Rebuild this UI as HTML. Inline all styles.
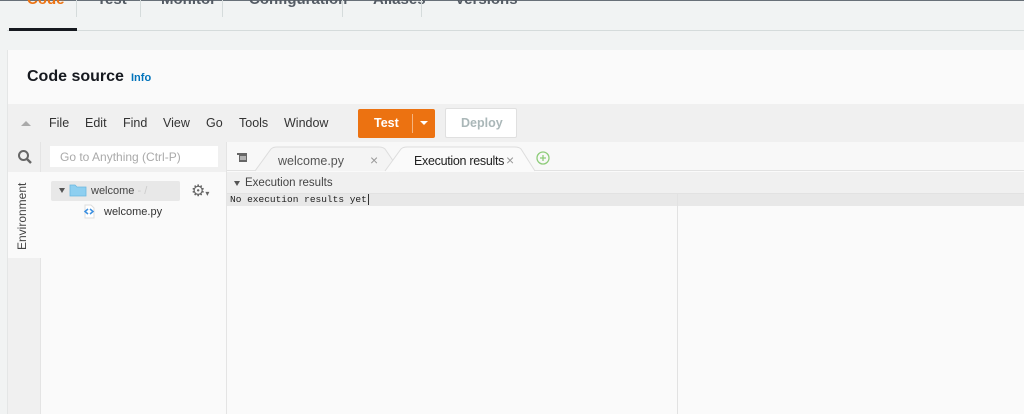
<!DOCTYPE html>
<html><head><style>
*{margin:0;padding:0;box-sizing:border-box}
body{width:1024px;height:414px;overflow:hidden;background:#f1f3f3;font-family:"Liberation Sans",sans-serif;position:relative}
.a{position:absolute}
.tab{position:absolute;top:-9px;font-size:15px;font-weight:bold;color:#545b64;white-space:nowrap}
.sep{position:absolute;top:0;width:1px;height:17px;background:#d5dbdb}
.menu{position:absolute;top:116px;font-size:12.5px;color:#333}
</style></head><body>
<div class="a" style="left:0;top:0;width:1024px;height:1px;background:#687078"></div>
<div class="tab" style="left:27px;color:#ec7211">Code</div>
<div class="sep" style="left:76px"></div>
<div class="tab" style="left:97px">Test</div>
<div class="sep" style="left:140px"></div>
<div class="tab" style="left:161px">Monitor</div>
<div class="sep" style="left:222px"></div>
<div class="tab" style="left:249px">Configuration</div>
<div class="sep" style="left:342px"></div>
<div class="tab" style="left:373px">Aliases</div>
<div class="sep" style="left:421px"></div>
<div class="tab" style="left:455px">Versions</div>
<div class="a" style="left:7px;top:30px;width:1017px;height:1px;background:#d5dbdb"></div>
<div class="a" style="left:9px;top:28px;width:68px;height:3px;background:#16191f"></div>

<div class="a" style="left:7px;top:50px;width:1017px;height:364px;background:#fafafa;border-left:1px solid #e4e6e6"></div>
<div class="a" style="left:27px;top:68px;font-size:16px;font-weight:bold;color:#16191f">Code source</div>
<div class="a" style="left:131px;top:72px;font-size:11px;font-weight:bold;color:#0073bb">Info</div>

<div class="a" style="left:8px;top:104px;width:1016px;height:38px;background:#f0f0f0"></div>
<div class="a" style="left:21px;top:121px;width:0;height:0;border-left:5px solid transparent;border-right:5px solid transparent;border-bottom:5px solid #aaa"></div>
<div class="menu" style="left:49px">File</div>
<div class="menu" style="left:85px">Edit</div>
<div class="menu" style="left:123px">Find</div>
<div class="menu" style="left:163px">View</div>
<div class="menu" style="left:206px">Go</div>
<div class="menu" style="left:239px">Tools</div>
<div class="menu" style="left:284px">Window</div>
<div class="a" style="left:358px;top:109px;width:77px;height:29px;background:#ec7211;border-radius:2px"></div>
<div class="a" style="left:374px;top:116px;font-size:12.5px;font-weight:bold;color:#fff">Test</div>
<div class="a" style="left:412px;top:114px;width:1px;height:19px;background:#f6b47e"></div>
<div class="a" style="left:420px;top:121px;width:0;height:0;border-left:4px solid transparent;border-right:4px solid transparent;border-top:4px solid #fff"></div>
<div class="a" style="left:445px;top:108px;width:72px;height:30px;background:#fff;border:1px solid #e0e0e0;border-radius:2px"></div>
<div class="a" style="left:461px;top:116px;font-size:12.5px;font-weight:bold;color:#aab7b8">Deploy</div>

<div class="a" style="left:8px;top:142px;width:33px;height:272px;background:#f0f0f0;border-right:1px solid #e4e4e4"></div>
<svg class="a" style="left:17px;top:149px" width="16" height="16" viewBox="0 0 16 16"><circle cx="6.5" cy="6.5" r="4.5" fill="none" stroke="#666" stroke-width="2"/><path d="M10 10l4 4" stroke="#666" stroke-width="2.4"/></svg>
<div class="a" style="left:8px;top:172px;width:33px;height:86px;background:#fafafa"></div>
<div class="a" style="left:15px;top:250px;transform:rotate(-90deg);transform-origin:0 0;font-size:12px;color:#444;white-space:nowrap">Environment</div>

<div class="a" style="left:41px;top:142px;width:186px;height:30px;background:#f0f0f0"></div>
<div class="a" style="left:50px;top:146px;width:168px;height:21px;background:#fff"></div>
<div class="a" style="left:60px;top:150px;font-size:12px;color:#aaa">Go to Anything (Ctrl-P)</div>
<div class="a" style="left:226px;top:142px;width:1px;height:272px;background:#e4e4e4"></div>
<div class="a" style="left:51px;top:181px;width:129px;height:20px;background:#e8e8e8;border-radius:2px"></div>
<div class="a" style="left:59px;top:188px;width:0;height:0;border-left:3.5px solid transparent;border-right:3.5px solid transparent;border-top:5px solid #555"></div>
<svg class="a" style="left:69px;top:183px" width="18" height="14" viewBox="0 0 18 14"><path d="M1 2h5l2 2h9v9H1z" fill="#8ecff0" stroke="#6bb8e0" stroke-width="0.8"/></svg>
<div class="a" style="left:91px;top:185px;font-size:11px;color:#444">welcome <span style="color:#ccc">- /</span></div>
<div class="a" style="left:191px;top:181px;font-size:16px;color:#666">⚙<span style="font-size:8px">▾</span></div>
<svg class="a" style="left:82px;top:204px" width="14" height="15" viewBox="0 0 14 15"><path d="M3 1h6l3 3v10H3z" fill="#fff" stroke="#ddd"/><path d="M6 5l-3 2.5L6 10M8 5l3 2.5L8 10" fill="none" stroke="#3b8fe0" stroke-width="1.5"/></svg>
<div class="a" style="left:104px;top:206px;font-size:11px;color:#333">welcome.py</div>

<div class="a" style="left:227px;top:142px;width:797px;height:29px;background:#f8f8f8;border-bottom:1px solid #e2e2e2"></div>
<svg class="a" style="left:236px;top:152px" width="12" height="11" viewBox="0 0 12 11"><path d="M1 1h10v9H3V3H1z" fill="#666"/><path d="M4 5h6M4 7h6" stroke="#fff"/></svg>
<svg class="a" style="left:255px;top:146px" width="280" height="26" viewBox="0 0 280 26"><path d="M0 25L16 3Q18 1 22 1H124Q128 1 130 3L145 25" fill="#f4f4f4" stroke="#ddd"/><path d="M130 25L146 3Q148 1 152 1H260Q264 1 266 3L280 25" fill="#fafafa" stroke="#ddd"/></svg>
<div class="a" style="left:278px;top:154px;font-size:12.5px;color:#555">welcome.py</div>
<div class="a" style="left:370px;top:152px;font-size:14px;color:#999">×</div>
<div class="a" style="left:414px;top:154px;font-size:12.5px;color:#222;width:91px;overflow:hidden;white-space:nowrap;letter-spacing:-0.3px">Execution results</div>
<div class="a" style="left:506px;top:152px;font-size:14px;color:#999">×</div>
<svg class="a" style="left:536px;top:151px" width="14" height="14" viewBox="0 0 14 14"><circle cx="7" cy="7" r="6" fill="none" stroke="#8ecc7a" stroke-width="1.3"/><path d="M7 4v6M4 7h6" stroke="#8ecc7a" stroke-width="1.3"/></svg>

<div class="a" style="left:227px;top:172px;width:797px;height:22px;background:#f0f0f0;border-bottom:1px solid #e2e2e2"></div>
<div class="a" style="left:234px;top:181px;width:0;height:0;border-left:3.5px solid transparent;border-right:3.5px solid transparent;border-top:5px solid #555"></div>
<div class="a" style="left:245px;top:177px;font-size:11.5px;color:#444">Execution results</div>
<div class="a" style="left:227px;top:194px;width:797px;height:12px;background:#e8e8e8"></div>
<div class="a" style="left:230px;top:194px;font-family:'Liberation Mono',monospace;font-size:9.5px;color:#222;line-height:12px">No execution results yet<span style="border-left:1px solid #333;margin-left:1px"></span></div>
<div class="a" style="left:677px;top:194px;width:1px;height:220px;background:#e2e2e2"></div>
</body></html>
